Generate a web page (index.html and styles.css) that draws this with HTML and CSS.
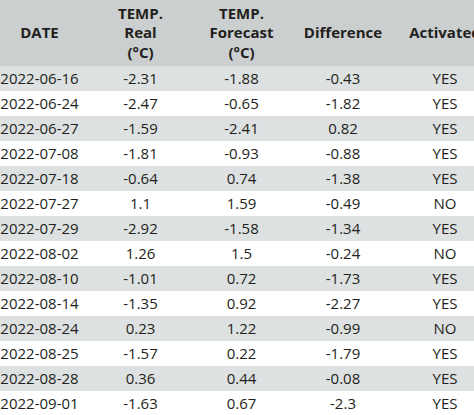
FILE: index.html
```html
<!DOCTYPE html>
<html lang="en">
<head>
<meta charset="utf-8">
<title>Temperature table</title>
<link rel="stylesheet" href="styles.css">
</head>
<body>
<div class="frame">
<table class="data">
  <colgroup>
    <col class="c1"><col class="c2"><col class="c3"><col class="c4"><col class="c5">
  </colgroup>
  <thead>
    <tr>
      <th>DATE</th>
      <th>TEMP.<br>Real<br>(°C)</th>
      <th>TEMP.<br>Forecast<br>(°C)</th>
      <th>Difference</th>
      <th>Activated</th>
    </tr>
  </thead>
  <tbody>
    <tr><td>2022-06-16</td><td>-2.31</td><td>-1.88</td><td>-0.43</td><td>YES</td></tr>
    <tr><td>2022-06-24</td><td>-2.47</td><td>-0.65</td><td>-1.82</td><td>YES</td></tr>
    <tr><td>2022-06-27</td><td>-1.59</td><td>-2.41</td><td>0.82</td><td>YES</td></tr>
    <tr><td>2022-07-08</td><td>-1.81</td><td>-0.93</td><td>-0.88</td><td>YES</td></tr>
    <tr><td>2022-07-18</td><td>-0.64</td><td>0.74</td><td>-1.38</td><td>YES</td></tr>
    <tr><td>2022-07-27</td><td>1.1</td><td>1.59</td><td>-0.49</td><td>NO</td></tr>
    <tr><td>2022-07-29</td><td>-2.92</td><td>-1.58</td><td>-1.34</td><td>YES</td></tr>
    <tr><td>2022-08-02</td><td>1.26</td><td>1.5</td><td>-0.24</td><td>NO</td></tr>
    <tr><td>2022-08-10</td><td>-1.01</td><td>0.72</td><td>-1.73</td><td>YES</td></tr>
    <tr><td>2022-08-14</td><td>-1.35</td><td>0.92</td><td>-2.27</td><td>YES</td></tr>
    <tr><td>2022-08-24</td><td>0.23</td><td>1.22</td><td>-0.99</td><td>NO</td></tr>
    <tr><td>2022-08-25</td><td>-1.57</td><td>0.22</td><td>-1.79</td><td>YES</td></tr>
    <tr><td>2022-08-28</td><td>0.36</td><td>0.44</td><td>-0.08</td><td>YES</td></tr>
    <tr><td>2022-09-01</td><td>-1.63</td><td>0.67</td><td>-2.3</td><td>YES</td></tr>
  </tbody>
</table>
</div>
</body>
</html>
```

FILE: styles.css
```css
html, body {
  margin: 0;
  padding: 0;
  background: #ffffff;
}
body {
  width: 474px;
  height: 415px;
  overflow: hidden;
}
.frame {
  width: 474px;
  height: 415px;
  overflow: hidden;
}
.data {
  margin-left: -11px;
  width: 507px;
  border-collapse: collapse;
  border-spacing: 0;
  table-layout: fixed;
  font-family: "Open Sans", "Noto Sans", sans-serif;
  font-size: 15px;
  color: #231f20;
}
.c1, .c2, .c3 { width: 101px; }
.c4 { width: 102px; }
.c5 { width: 102px; }
.data th {
  height: 66px;
  padding: 0;
  background: #cbcfcf;
  font-weight: 700;
  line-height: 19.5px;
  text-align: center;
  vertical-align: middle;
  white-space: nowrap;
}
.data td {
  height: 25px;
  padding: 0;
  line-height: 25px;
  text-align: center;
  vertical-align: middle;
  white-space: nowrap;
}
.data tbody tr:nth-child(odd) td {
  background: #dee1e1;
}
```
